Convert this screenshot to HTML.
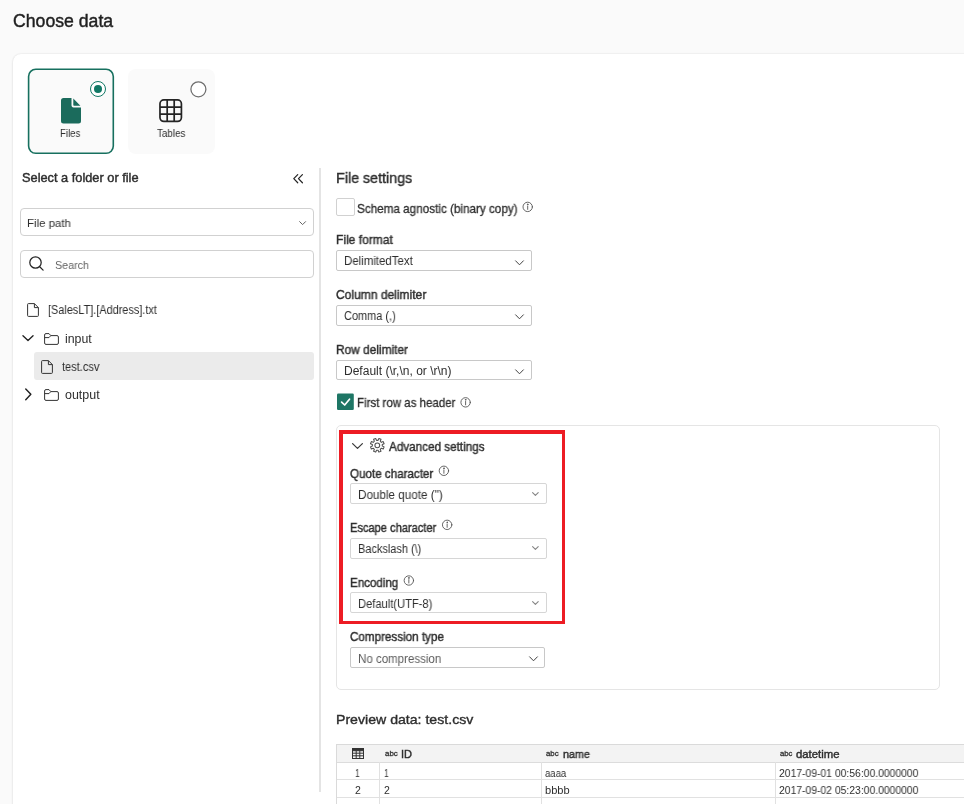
<!DOCTYPE html>
<html><head><meta charset="utf-8"><title>Choose data</title>
<style>
html,body{margin:0;padding:0;}
body{width:964px;height:812px;overflow:hidden;background:#fff;position:relative;font-family:"Liberation Sans",sans-serif;}
.t{position:absolute;transform-origin:0 0;will-change:transform;white-space:pre;line-height:20px;height:20px;font-family:"Liberation Sans",sans-serif;}
.b{position:absolute;box-sizing:border-box;}
svg{position:absolute;overflow:visible;}
</style></head><body>
<!-- page background -->
<div class="b" style="left:0;top:0;width:964px;height:804px;background:#fafafa;"></div>
<!-- main white card -->
<div class="b" style="left:13px;top:54px;width:980px;height:790px;background:#fff;border-radius:8px 0 0 8px;box-shadow:0 0 2px rgba(0,0,0,0.12),0 1px 3px rgba(0,0,0,0.06);"></div>
<div class="b" style="left:0;top:804px;width:964px;height:8px;background:#fff;"></div>

<!-- Files tile -->
<svg style="left:0;top:0" width="240" height="200" viewBox="0 0 240 200"><rect x="28.6" y="69.3" width="84.7" height="84" rx="7.2" fill="#fafafa" stroke="#17705f" stroke-width="1.6"/></svg>
<!-- Tables tile -->
<div class="b" style="left:128px;top:69px;width:87px;height:85px;border-radius:8px;background:#fafafa;"></div>
<!-- radios -->
<div class="b" style="left:90px;top:81px;width:16px;height:16px;border:1.3px solid #117865;border-radius:50%;background:#fff;"></div>
<div class="b" style="left:94px;top:85px;width:8px;height:8px;border-radius:50%;background:#117865;"></div>
<svg style="left:0;top:0" width="240" height="120" viewBox="0 0 240 120"><circle cx="198.4" cy="89.35" r="7.5" fill="#fff" stroke="#6e6e6e" stroke-width="1.25"/></svg>
<!-- file icon filled -->
<svg style="left:61px;top:98px" width="20" height="26" viewBox="0 0 20 26"><path d="M2.5 0 H10.5 V7.5 a2 2 0 0 0 2 2 H20 V23 a2.5 2.5 0 0 1 -2.5 2.5 H2.5 A2.5 2.5 0 0 1 0 23 V2.5 A2.5 2.5 0 0 1 2.5 0 Z M12.3 0.6 L19.4 7.7 H13 a0.7 0.7 0 0 1 -0.7 -0.7 Z" fill="#1b6b5c"/></svg>
<!-- table icon -->
<svg style="left:159.4px;top:99.1px" width="23.4" height="23.4" viewBox="0 0 24 24" fill="none" stroke="#242424" stroke-width="1.75"><rect x="1" y="1" width="22" height="22" rx="4"/><path d="M8.4 1 V23 M15.6 1 V23 M1 8.4 H23 M1 15.6 H23"/></svg>

<!-- collapse << -->
<svg style="left:293px;top:174px" width="10.4" height="9.4" viewBox="0 0 11 10" fill="none" stroke="#242424" stroke-width="1.3" stroke-linecap="round" stroke-linejoin="round"><path d="M5 0.7 L0.8 5 L5 9.3 M10 0.7 L5.8 5 L10 9.3"/></svg>

<!-- vertical divider -->
<div class="b" style="left:319.4px;top:168px;width:1.6px;height:624px;background:#e4e4e4;"></div>

<!-- File path dropdown -->
<div class="b" style="left:19.8px;top:208px;width:294px;height:27.5px;border:1px solid #d1d1d1;border-radius:4px;background:#fff;"></div>
<svg style="left:298.9px;top:220.5px" width="7.2" height="4.5" viewBox="0 0 8 5" fill="none" stroke="#616161" stroke-width="1.1" stroke-linecap="round" stroke-linejoin="round"><path d="M0.7 0.7 L4 4 L7.3 0.7"/></svg>
<!-- Search box -->
<div class="b" style="left:19.8px;top:250px;width:294px;height:28px;border:1px solid #d1d1d1;border-radius:4px;background:#fff;"></div>
<svg style="left:29.1px;top:255.95px" width="16" height="16" viewBox="0 0 16 16" fill="none" stroke="#242424" stroke-width="1.25" stroke-linecap="round"><circle cx="6.5" cy="6.5" r="5.7"/><path d="M10.7 10.7 L14.1 14.1"/></svg>

<!-- tree -->
<div class="b" style="left:34px;top:352px;width:280px;height:28px;background:#ebebeb;border-radius:3px;"></div>
<svg style="left:27.2px;top:302.9px" width="12" height="14" viewBox="0 0 12 14" fill="none" stroke="#333" stroke-width="1" stroke-linejoin="round"><path d="M1.4 0.6 H7.4 L11.4 4.6 V12.6 a0.8 0.8 0 0 1 -0.8 0.8 H1.4 A0.8 0.8 0 0 1 0.6 12.6 V1.4 A0.8 0.8 0 0 1 1.4 0.6 Z M7.4 0.6 V4.6 H11.4"/></svg>
<svg style="left:41.2px;top:359.9px" width="12" height="14" viewBox="0 0 12 14" fill="none" stroke="#333" stroke-width="1" stroke-linejoin="round"><path d="M1.4 0.6 H7.4 L11.4 4.6 V12.6 a0.8 0.8 0 0 1 -0.8 0.8 H1.4 A0.8 0.8 0 0 1 0.6 12.6 V1.4 A0.8 0.8 0 0 1 1.4 0.6 Z M7.4 0.6 V4.6 H11.4"/></svg>
<!-- chevron down (input) -->
<svg style="left:22.3px;top:334.9px" width="12" height="6.2" viewBox="0 0 13 7" fill="none" stroke="#1f1f1f" stroke-width="1.5" stroke-linecap="round" stroke-linejoin="round"><path d="M0.8 0.8 L6.5 6.2 L12.2 0.8"/></svg>
<!-- chevron right (output) -->
<svg style="left:24.7px;top:388.1px" width="6.6" height="12.6" viewBox="0 0 7 13" fill="none" stroke="#1f1f1f" stroke-width="1.5" stroke-linecap="round" stroke-linejoin="round"><path d="M0.8 0.8 L6.2 6.5 L0.8 12.2"/></svg>
<!-- folders -->
<svg style="left:43.9px;top:332.8px" width="15" height="12" viewBox="0 0 15 12" fill="none" stroke="#333" stroke-width="1" stroke-linejoin="round"><path d="M0.6 2 a1.4 1.4 0 0 1 1.4 -1.4 H5 L6.8 2.6 H13 a1.4 1.4 0 0 1 1.4 1.4 V10 a1.4 1.4 0 0 1 -1.4 1.4 H2 A1.4 1.4 0 0 1 0.6 10 Z M0.6 4.6 H5 L6.8 2.6"/></svg>
<svg style="left:43.9px;top:389.3px" width="15" height="12" viewBox="0 0 15 12" fill="none" stroke="#333" stroke-width="1" stroke-linejoin="round"><path d="M0.6 2 a1.4 1.4 0 0 1 1.4 -1.4 H5 L6.8 2.6 H13 a1.4 1.4 0 0 1 1.4 1.4 V10 a1.4 1.4 0 0 1 -1.4 1.4 H2 A1.4 1.4 0 0 1 0.6 10 Z M0.6 4.6 H5 L6.8 2.6"/></svg>

<!-- right panel: checkbox unchecked -->
<div class="b" style="left:336px;top:197.5px;width:18.5px;height:18.5px;border:1px solid #d1d1d1;border-radius:2px;background:#fff;"></div>
<!-- info icons -->

<!-- dropdowns (file settings) -->
<div class="b" style="left:336px;top:250px;width:195.8px;height:21px;border:1px solid #c8c8c8;border-radius:2px;background:#fff;"></div>
<div class="b" style="left:336px;top:304.7px;width:195.8px;height:21px;border:1px solid #c8c8c8;border-radius:2px;background:#fff;"></div>
<div class="b" style="left:336px;top:359.8px;width:195.8px;height:20.6px;border:1px solid #c8c8c8;border-radius:2px;background:#fff;"></div>
<svg style="left:514.5px;top:259.5px" width="9" height="6" viewBox="0 0 9 6" fill="none" stroke="#424242" stroke-width="1" stroke-linecap="round" stroke-linejoin="round"><path d="M0.6 0.8 L4.5 4.8 L8.4 0.8"/></svg>
<svg style="left:514.5px;top:314px" width="9" height="6" viewBox="0 0 9 6" fill="none" stroke="#424242" stroke-width="1" stroke-linecap="round" stroke-linejoin="round"><path d="M0.6 0.8 L4.5 4.8 L8.4 0.8"/></svg>
<svg style="left:514.5px;top:369px" width="9" height="6" viewBox="0 0 9 6" fill="none" stroke="#424242" stroke-width="1" stroke-linecap="round" stroke-linejoin="round"><path d="M0.6 0.8 L4.5 4.8 L8.4 0.8"/></svg>

<!-- checked checkbox -->
<svg style="left:0;top:0" width="400" height="420" viewBox="0 0 400 420"><rect x="337" y="393.6" width="16.8" height="16.4" rx="1.2" fill="#1e7665"/><path d="M341.6 402.1 L344.7 405 L349.5 399.2" fill="none" stroke="#fff" stroke-width="1.7" stroke-linecap="round" stroke-linejoin="round"/></svg>


<!-- advanced panel -->
<div class="b" style="left:336px;top:425.3px;width:604px;height:264.4px;border:1px solid #e5e5e5;border-radius:5px;background:#fff;"></div>
<!-- red highlight -->
<div class="b" style="left:339.1px;top:429.9px;width:226.1px;height:194.1px;border-style:solid;border-color:#ed1c24;border-width:4px 3.7px 3.6px 4.3px;"></div>
<!-- info icons -->
<svg style="left:0;top:0" width="964" height="812" viewBox="0 0 964 812" fill="none" stroke="#555" stroke-width="0.9" stroke-linecap="round"><circle cx="527.70" cy="206.90" r="4.7"/><path d="M527.70 206.00 V209.40"/><circle cx="527.70" cy="204.35" r="0.35" fill="#555"/><circle cx="465.60" cy="402.35" r="4.7"/><path d="M465.60 401.45 V404.85"/><circle cx="465.60" cy="399.80" r="0.35" fill="#555"/><circle cx="443.90" cy="470.80" r="4.7"/><path d="M443.90 469.90 V473.30"/><circle cx="443.90" cy="468.25" r="0.35" fill="#555"/><circle cx="447.15" cy="524.85" r="4.7"/><path d="M447.15 523.95 V527.35"/><circle cx="447.15" cy="522.30" r="0.35" fill="#555"/><circle cx="408.85" cy="580.50" r="4.7"/><path d="M408.85 579.60 V583.00"/><circle cx="408.85" cy="577.95" r="0.35" fill="#555"/></svg>
<!-- adv chevron -->
<svg style="left:351.7px;top:443px" width="11" height="6" viewBox="0 0 11 6" fill="none" stroke="#3a3a3a" stroke-width="1.25" stroke-linecap="round" stroke-linejoin="round"><path d="M0.6 0.6 L5.5 5.4 L10.4 0.6"/></svg>
<!-- gear -->
<svg style="left:0;top:0" width="400" height="460" viewBox="0 0 400 460" fill="none" stroke="#505050" stroke-width="1.05" stroke-linejoin="round"><path d="M378.08 440.36 L378.87 438.48 L381.01 439.36 L380.24 441.25 L381.35 442.36 L383.24 441.59 L384.12 443.73 L382.24 444.52 L382.24 446.08 L384.12 446.87 L383.24 449.01 L381.35 448.24 L380.24 449.35 L381.01 451.24 L378.87 452.12 L378.08 450.24 L376.52 450.24 L375.73 452.12 L373.59 451.24 L374.36 449.35 L373.25 448.24 L371.36 449.01 L370.48 446.87 L372.36 446.08 L372.36 444.52 L370.48 443.73 L371.36 441.59 L373.25 442.36 L374.36 441.25 L373.59 439.36 L375.73 438.48 L376.52 440.36 Z"/><circle cx="377.3" cy="445.3" r="2.4"/></svg>

<!-- adv dropdowns -->
<div class="b" style="left:350px;top:483.2px;width:196.8px;height:20.9px;border:1px solid #d6d6d6;border-radius:2px;background:#fff;"></div>
<div class="b" style="left:350px;top:537.8px;width:196.8px;height:20.9px;border:1px solid #d6d6d6;border-radius:2px;background:#fff;"></div>
<div class="b" style="left:350px;top:592.2px;width:196.8px;height:21px;border:1px solid #d6d6d6;border-radius:2px;background:#fff;"></div>
<div class="b" style="left:350px;top:647.3px;width:195.2px;height:21.2px;border:1px solid #c8c8c8;border-radius:2px;background:#fff;"></div>
<svg style="left:532px;top:491.7px" width="6.8" height="4.3" viewBox="0 0 8 5" fill="none" stroke="#858585" stroke-width="1.3" stroke-linecap="round" stroke-linejoin="round"><path d="M0.7 0.7 L4 4 L7.3 0.7"/></svg>
<svg style="left:532px;top:546.3px" width="6.8" height="4.3" viewBox="0 0 8 5" fill="none" stroke="#858585" stroke-width="1.3" stroke-linecap="round" stroke-linejoin="round"><path d="M0.7 0.7 L4 4 L7.3 0.7"/></svg>
<svg style="left:532px;top:600.8px" width="6.8" height="4.3" viewBox="0 0 8 5" fill="none" stroke="#858585" stroke-width="1.3" stroke-linecap="round" stroke-linejoin="round"><path d="M0.7 0.7 L4 4 L7.3 0.7"/></svg>
<svg style="left:529px;top:656px" width="9" height="6" viewBox="0 0 9 6" fill="none" stroke="#424242" stroke-width="1" stroke-linecap="round" stroke-linejoin="round"><path d="M0.6 0.8 L4.5 4.8 L8.4 0.8"/></svg>

<!-- preview table -->
<div class="b" style="left:335.9px;top:744.5px;width:640px;height:18px;background:#f3f3f3;"></div>
<div class="b" style="left:335.9px;top:744px;width:640px;height:1px;background:#dadada;"></div>
<div class="b" style="left:335.9px;top:761.5px;width:640px;height:1.2px;background:#dcdcdc;"></div>
<div class="b" style="left:335.9px;top:779.2px;width:640px;height:1px;background:#e1e1e1;"></div>
<div class="b" style="left:335.9px;top:797.2px;width:640px;height:1px;background:#e1e1e1;"></div>
<div class="b" style="left:335.9px;top:744px;width:1px;height:59.5px;background:#dadada;"></div>
<div class="b" style="left:378.9px;top:762px;width:1px;height:41.5px;background:#e1e1e1;"></div>
<div class="b" style="left:540.6px;top:762px;width:1px;height:41.5px;background:#e1e1e1;"></div>
<div class="b" style="left:774.7px;top:762px;width:1px;height:41.5px;background:#e1e1e1;"></div>
<!-- table header icon -->
<svg style="left:352px;top:748px" width="12" height="11" viewBox="0 0 12 11" fill="none" stroke="#333" stroke-width="1"><rect x="0.5" y="0.5" width="11" height="10"/><rect x="0.5" y="0.5" width="11" height="2.2" fill="#333"/><path d="M0.5 5.2 H11.5 M0.5 7.8 H11.5 M4.2 2.5 V10.5 M7.8 2.5 V10.5"/></svg>

<div class="t" style="left:13.10px;top:10.60px;font-size:17.6px;transform:scaleX(1.0035);color:#1f1f1f;font-weight:400;-webkit-text-stroke:0.42px currentColor;">Choose data</div>
<div class="t" style="left:60.36px;top:123.00px;font-size:11px;transform:scaleX(0.8750);color:#2e2e2e;font-weight:400;">Files</div>
<div class="t" style="left:157.06px;top:123.00px;font-size:11px;transform:scaleX(0.8941);color:#2e2e2e;font-weight:400;">Tables</div>
<div class="t" style="left:21.91px;top:167.70px;font-size:12.2px;transform:scaleX(1.0491);color:#2e2e2e;font-weight:400;-webkit-text-stroke:0.42px currentColor;">Select a folder or file</div>
<div class="t" style="left:26.94px;top:213.00px;font-size:11.6px;transform:scaleX(0.9860);color:#2e2e2e;font-weight:400;">File path</div>
<div class="t" style="left:55.34px;top:254.80px;font-size:11.6px;transform:scaleX(0.9241);color:#616161;font-weight:400;">Search</div>
<div class="t" style="left:48.02px;top:300.20px;font-size:12px;transform:scaleX(0.9085);color:#2e2e2e;font-weight:400;">[SalesLT].[Address].txt</div>
<div class="t" style="left:65.22px;top:328.60px;font-size:12px;transform:scaleX(1.0280);color:#2e2e2e;font-weight:400;">input</div>
<div class="t" style="left:61.82px;top:357.00px;font-size:12px;transform:scaleX(0.9182);color:#2e2e2e;font-weight:400;">test.csv</div>
<div class="t" style="left:65.22px;top:385.40px;font-size:12px;transform:scaleX(1.0385);color:#2e2e2e;font-weight:400;">output</div>
<div class="t" style="left:336.02px;top:168.30px;font-size:14.6px;transform:scaleX(0.9790);color:#2e2e2e;font-weight:400;-webkit-text-stroke:0.42px currentColor;">File settings</div>
<div class="t" style="left:357.21px;top:198.60px;font-size:12.2px;transform:scaleX(0.9596);color:#2e2e2e;font-weight:400;-webkit-text-stroke:0.3px currentColor;">Schema agnostic (binary copy)</div>
<div class="t" style="left:336.11px;top:230.20px;font-size:12.2px;transform:scaleX(0.9859);color:#2e2e2e;font-weight:400;-webkit-text-stroke:0.42px currentColor;">File format</div>
<div class="t" style="left:344.12px;top:251.30px;font-size:12px;transform:scaleX(0.9546);color:#2e2e2e;font-weight:400;">DelimitedText</div>
<div class="t" style="left:336.11px;top:284.60px;font-size:12.2px;transform:scaleX(0.9872);color:#2e2e2e;font-weight:400;-webkit-text-stroke:0.42px currentColor;">Column delimiter</div>
<div class="t" style="left:344.12px;top:306.20px;font-size:12px;transform:scaleX(0.9133);color:#2e2e2e;font-weight:400;">Comma (,)</div>
<div class="t" style="left:336.11px;top:339.60px;font-size:12.2px;transform:scaleX(0.9761);color:#2e2e2e;font-weight:400;-webkit-text-stroke:0.42px currentColor;">Row delimiter</div>
<div class="t" style="left:344.12px;top:360.90px;font-size:12px;transform:scaleX(1.0017);color:#2e2e2e;font-weight:400;">Default (\r,\n, or \r\n)</div>
<div class="t" style="left:357.41px;top:393.10px;font-size:12.2px;transform:scaleX(0.9430);color:#2e2e2e;font-weight:400;-webkit-text-stroke:0.3px currentColor;">First row as header</div>
<div class="t" style="left:389.01px;top:436.60px;font-size:12.2px;transform:scaleX(0.9594);color:#2e2e2e;font-weight:400;-webkit-text-stroke:0.42px currentColor;">Advanced settings</div>
<div class="t" style="left:350.31px;top:463.70px;font-size:12.2px;transform:scaleX(0.9528);color:#2e2e2e;font-weight:400;-webkit-text-stroke:0.42px currentColor;">Quote character</div>
<div class="t" style="left:357.82px;top:484.80px;font-size:12px;transform:scaleX(0.9733);color:#2e2e2e;font-weight:400;">Double quote (&quot;)</div>
<div class="t" style="left:350.31px;top:518.10px;font-size:12.2px;transform:scaleX(0.9096);color:#2e2e2e;font-weight:400;-webkit-text-stroke:0.42px currentColor;">Escape character</div>
<div class="t" style="left:357.82px;top:539.30px;font-size:12px;transform:scaleX(0.9135);color:#2e2e2e;font-weight:400;">Backslash (\)</div>
<div class="t" style="left:350.31px;top:572.80px;font-size:12.2px;transform:scaleX(0.9496);color:#2e2e2e;font-weight:400;-webkit-text-stroke:0.42px currentColor;">Encoding</div>
<div class="t" style="left:357.82px;top:594.10px;font-size:12px;transform:scaleX(0.9293);color:#2e2e2e;font-weight:400;">Default(UTF-8)</div>
<div class="t" style="left:350.31px;top:626.90px;font-size:12.2px;transform:scaleX(0.9555);color:#2e2e2e;font-weight:400;-webkit-text-stroke:0.42px currentColor;">Compression type</div>
<div class="t" style="left:357.82px;top:648.60px;font-size:12px;transform:scaleX(0.9603);color:#5c5c5c;font-weight:400;">No compression</div>
<div class="t" style="left:336.16px;top:709.60px;font-size:13.6px;transform:scaleX(1.0385);color:#2e2e2e;font-weight:400;-webkit-text-stroke:0.38px currentColor;">Preview data: test.csv</div>
<div class="t" style="left:384.60px;top:743.90px;font-size:7.4px;transform:scaleX(1.0671);color:#333;font-weight:400;-webkit-text-stroke:0.3px currentColor;">abc</div>
<div class="t" style="left:401.16px;top:744.20px;font-size:11px;transform:scaleX(0.9755);color:#2e2e2e;font-weight:400;-webkit-text-stroke:0.42px currentColor;">ID</div>
<div class="t" style="left:546.10px;top:743.90px;font-size:7.4px;transform:scaleX(1.0587);color:#333;font-weight:400;-webkit-text-stroke:0.3px currentColor;">abc</div>
<div class="t" style="left:562.56px;top:744.20px;font-size:11px;transform:scaleX(0.9745);color:#2e2e2e;font-weight:400;-webkit-text-stroke:0.42px currentColor;">name</div>
<div class="t" style="left:779.80px;top:743.90px;font-size:7.4px;transform:scaleX(1.0420);color:#333;font-weight:400;-webkit-text-stroke:0.3px currentColor;">abc</div>
<div class="t" style="left:796.26px;top:744.20px;font-size:11px;transform:scaleX(1.0314);color:#2e2e2e;font-weight:400;-webkit-text-stroke:0.42px currentColor;">datetime</div>
<div class="t" style="left:355.48px;top:762.60px;font-size:10.5px;transform:scaleX(0.8068);color:#2e2e2e;font-weight:400;">1</div>
<div class="t" style="left:355.28px;top:780.00px;font-size:10.5px;transform:scaleX(0.9437);color:#2e2e2e;font-weight:400;">2</div>
<div class="t" style="left:384.38px;top:762.60px;font-size:10.5px;transform:scaleX(0.8068);color:#2e2e2e;font-weight:400;">1</div>
<div class="t" style="left:383.88px;top:780.00px;font-size:10.5px;transform:scaleX(0.9437);color:#2e2e2e;font-weight:400;">2</div>
<div class="t" style="left:545.28px;top:762.60px;font-size:10.5px;transform:scaleX(0.9082);color:#2e2e2e;font-weight:400;">aaaa</div>
<div class="t" style="left:545.28px;top:780.00px;font-size:10.5px;transform:scaleX(1.0538);color:#2e2e2e;font-weight:400;">bbbb</div>
<div class="t" style="left:778.98px;top:762.60px;font-size:10.5px;transform:scaleX(0.9867);color:#2e2e2e;font-weight:400;">2017-09-01 00:56:00.0000000</div>
<div class="t" style="left:778.98px;top:780.00px;font-size:10.5px;transform:scaleX(0.9867);color:#2e2e2e;font-weight:400;">2017-09-02 05:23:00.0000000</div>
</body></html>
